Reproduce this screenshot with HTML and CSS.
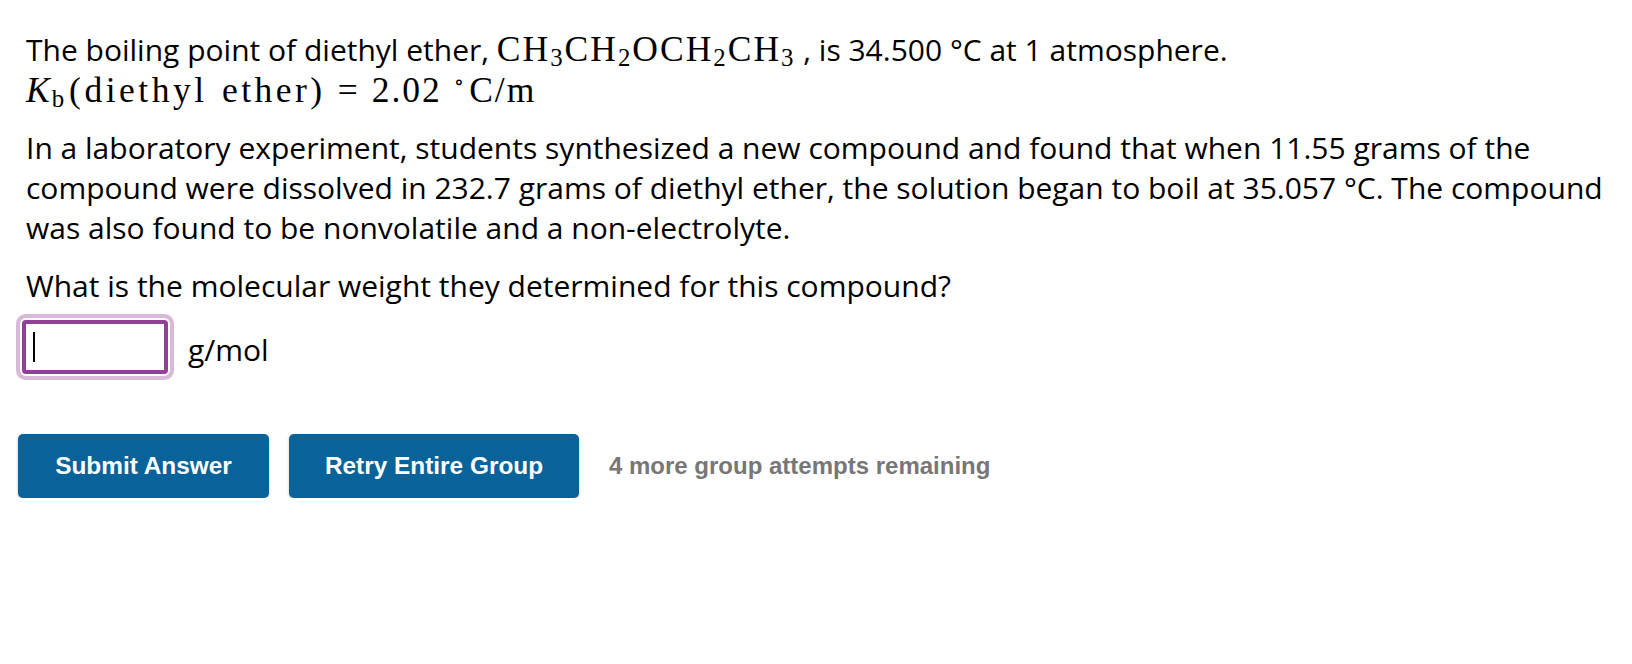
FILE: index.html
```html
<!DOCTYPE html>
<html>
<head>
<meta charset="utf-8">
<link rel="stylesheet" href="styles.css">
</head>
<body>
<div class="question">
  <p class="intro">The boiling point of diethyl ether, <span class="math">CH<sub>3</sub>CH<sub>2</sub>OCH<sub>2</sub>CH<sub>3</sub></span> , is 34.500 °C at 1 atmosphere.<br><span class="math"><i>K</i><sub class="kb">b</sub><span class="words">(diethyl ether)</span><span class="op">=</span>2.02 <sup>∘</sup>C/m</span></p>
  <p class="body">In a laboratory experiment, students synthesized a new compound and found that when 11.55 grams of the compound were dissolved in 232.7 grams of diethyl ether, the solution began to boil at 35.057 °C. The compound was also found to be nonvolatile and a non-electrolyte.</p>
  <p class="ask">What is the molecular weight they determined for this compound?</p>
  <div class="answer">
    <span class="field"><span class="caret"></span></span>
    <span class="unit">g/mol</span>
  </div>
  <div class="actions">
    <button class="btn submit">Submit Answer</button>
    <button class="btn retry">Retry Entire Group</button>
    <span class="remaining">4 more group attempts remaining</span>
  </div>
</div>
</body>
</html>
```
FILE: styles.css
```css
html, body {
  margin: 0;
  padding: 0;
  background: #fff;
}
.question {
  padding: 29px 0 0 26px;
  font-family: "Open Sans", "Noto Sans", sans-serif;
  font-size: 30px;
  line-height: 40px;
  color: #000;
}
.question p {
  margin: 0;
}
.intro {
  margin-bottom: 17px !important;
}
.body {
  margin-bottom: 18px !important;
}
.math {
  font-family: "Liberation Serif", "DejaVu Serif", serif;
  font-size: 35.5px;
  letter-spacing: 2px;
}
.math i {
  letter-spacing: 2px;
}
.math .words {
  letter-spacing: 3.5px;
  word-spacing: 2px;
}
.math sub {
  font-size: 0.7em;
  line-height: 0;
  vertical-align: -0.2em;
}
.math .kb {
  margin-right: 3px;
}
.math sup {
  font-size: 0.6em;
  line-height: 0;
  vertical-align: 0.6em;
  margin-left: 1px;
  margin-right: 3px;
}
.math .op {
  margin: 0 12px;
}
.answer {
  display: flex;
  align-items: center;
  gap: 20px;
  margin-top: 14px;
  margin-left: -4px;
}
.field {
  display: block;
  box-sizing: border-box;
  width: 146px;
  height: 54px;
  border: 4px solid #923f98;
  border-radius: 4px;
  box-shadow: 0 0 0 2px #fff, 0 0 0 6px #d9b9da;
  position: relative;
}
.caret {
  position: absolute;
  left: 7px;
  top: 8px;
  width: 2px;
  height: 30px;
  background: #000;
}
.unit {
  padding-top: 6px;
}
.actions {
  display: flex;
  align-items: center;
  gap: 20px;
  margin-top: 60px;
  margin-left: -8px;
}
.btn {
  font-family: "Liberation Sans", Arial, sans-serif;
  font-weight: bold;
  font-size: 24.4px;
  color: #fff;
  background: #07639a;
  border: none;
  border-radius: 5px;
  height: 64px;
  box-shadow: 0 1px 3px rgba(0, 0, 0, 0.25);
  padding: 0;
}
.submit { width: 251px; }
.retry { width: 290px; }
.remaining {
  font-family: "Liberation Sans", Arial, sans-serif;
  font-weight: bold;
  font-size: 24px;
  color: #777;
  margin-left: 10px;
}
```
